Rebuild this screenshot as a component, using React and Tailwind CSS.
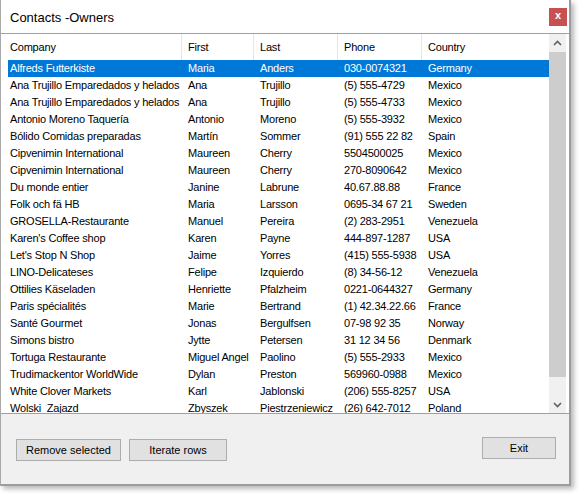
import React from "react";

const rows = [
  ["Alfreds Futterkiste", "Maria", "Anders", "030-0074321", "Germany"],
  ["Ana Trujillo Emparedados y helados", "Ana", "Trujillo", "(5) 555-4729", "Mexico"],
  ["Ana Trujillo Emparedados y helados", "Ana", "Trujillo", "(5) 555-4733", "Mexico"],
  ["Antonio Moreno Taquería", "Antonio", "Moreno", "(5) 555-3932", "Mexico"],
  ["Bólido Comidas preparadas", "Martín", "Sommer", "(91) 555 22 82", "Spain"],
  ["Cipvenimin International", "Maureen", "Cherry", "5504500025", "Mexico"],
  ["Cipvenimin International", "Maureen", "Cherry", "270-8090642", "Mexico"],
  ["Du monde entier", "Janine", "Labrune", "40.67.88.88", "France"],
  ["Folk och fä HB", "Maria", "Larsson", "0695-34 67 21", "Sweden"],
  ["GROSELLA-Restaurante", "Manuel", "Pereira", "(2) 283-2951", "Venezuela"],
  ["Karen's Coffee shop", "Karen", "Payne", "444-897-1287", "USA"],
  ["Let's Stop N Shop", "Jaime", "Yorres", "(415) 555-5938", "USA"],
  ["LINO-Delicateses", "Felipe", "Izquierdo", "(8) 34-56-12", "Venezuela"],
  ["Ottilies Käseladen", "Henriette", "Pfalzheim", "0221-0644327", "Germany"],
  ["Paris spécialités", "Marie", "Bertrand", "(1) 42.34.22.66", "France"],
  ["Santé Gourmet", "Jonas", "Bergulfsen", "07-98 92 35", "Norway"],
  ["Simons bistro", "Jytte", "Petersen", "31 12 34 56", "Denmark"],
  ["Tortuga Restaurante", "Miguel Angel", "Paolino", "(5) 555-2933", "Mexico"],
  ["Trudimackentor WorldWide", "Dylan", "Preston", "569960-0988", "Mexico"],
  ["White Clover Markets", "Karl", "Jablonski", "(206) 555-8257", "USA"],
  ["Wolski  Zajazd", "Zbyszek", "Piestrzeniewicz", "(26) 642-7012", "Poland"],
];

function Row({ r, selected }) {
  return (
    <div
      className={
        "flex h-[17px] shrink-0 items-center whitespace-pre " +
        (selected ? "bg-[#0078d7] text-white" : "text-black")
      }
    >
      <div className="w-[174px] shrink-0 pl-[2px] overflow-hidden">{r[0]}</div>
      <div className="w-[72px] shrink-0 pl-[6px] overflow-hidden">{r[1]}</div>
      <div className="w-[84px] shrink-0 pl-[6px] overflow-hidden">{r[2]}</div>
      <div className="w-[84px] shrink-0 pl-[6px] overflow-hidden">{r[3]}</div>
      <div className="flex-1 pl-[6px] overflow-hidden">{r[4]}</div>
    </div>
  );
}

export default function App() {
  return (
    <div className="w-[581px] h-[496px] bg-white font-['Liberation_Sans',Arial,sans-serif]">
      <div className="w-[571px] flex flex-col border-l border-[#a9a9a9] border-r-2 border-r-[#9c9c9c] border-b-2 border-b-[#9c9c9c] shadow-[3px_3px_5px_rgba(0,0,0,0.28)] bg-white">
        {/* Title bar */}
        <div className="h-[33px] flex items-center justify-between pl-[9px] pr-[2px]">
          <span className="text-[13px] text-black leading-none pt-[2px]">Contacts -Owners</span>
          <div className="w-[18px] h-[18px] bg-[#c75050] flex items-center justify-center text-white text-[11px] font-bold leading-none pb-[2px]">
            x
          </div>
        </div>
        {/* Grid */}
        <div className="h-[381px] flex border-t border-b border-[#a0a0a0] text-[11px] leading-none tracking-[-0.2px]">
          <div className="w-[548px] flex flex-col overflow-hidden pl-[7px]">
            <div className="h-[26px] shrink-0 flex items-center text-black">
              <div className="w-[174px] h-full flex items-center shrink-0 pl-[2px] border-r border-[#e5e5e5]">Company</div>
              <div className="w-[72px] h-full flex items-center shrink-0 pl-[6px] border-r border-[#e5e5e5]">First</div>
              <div className="w-[84px] h-full flex items-center shrink-0 pl-[6px] border-r border-[#e5e5e5]">Last</div>
              <div className="w-[84px] h-full flex items-center shrink-0 pl-[6px] border-r border-[#e5e5e5]">Phone</div>
              <div className="flex-1 h-full flex items-center pl-[6px]">Country</div>
            </div>
            {rows.map((r, i) => (
              <Row key={i} r={r} selected={i === 0} />
            ))}
          </div>
          {/* Scrollbar */}
          <div className="w-[17px] flex flex-col bg-[#f0f0f0]">
            <div className="h-[17px] flex items-center justify-center">
              <svg width="9" height="6" viewBox="0 0 9 6">
                <path d="M1 5 L4.5 1.5 L8 5" fill="none" stroke="#606060" strokeWidth="1.6" />
              </svg>
            </div>
            <div className="flex-1 flex flex-col pt-[1px]">
              <div className="h-[325px] bg-[#cdcdcd]" />
            </div>
            <div className="h-[17px] flex items-center justify-center">
              <svg width="9" height="6" viewBox="0 0 9 6">
                <path d="M1 1 L4.5 4.5 L8 1" fill="none" stroke="#606060" strokeWidth="1.6" />
              </svg>
            </div>
          </div>
          <div className="w-[3px]" />
        </div>
        {/* Bottom panel */}
        <div className="h-[70px] bg-[#f0f0f0] flex items-start pl-[15px] pr-[13px] text-[11px] text-black">
          <div className="mt-[25px] w-[105px] h-[22px] border border-[#adadad] bg-[#e1e1e1] flex items-center justify-center">
            Remove selected
          </div>
          <div className="mt-[25px] ml-[8px] w-[98px] h-[22px] border border-[#adadad] bg-[#e1e1e1] flex items-center justify-center">
            Iterate rows
          </div>
          <div className="flex-1" />
          <div className="mt-[23px] w-[74px] h-[22px] border border-[#adadad] bg-[#e1e1e1] flex items-center justify-center">
            Exit
          </div>
        </div>
      </div>
    </div>
  );
}
